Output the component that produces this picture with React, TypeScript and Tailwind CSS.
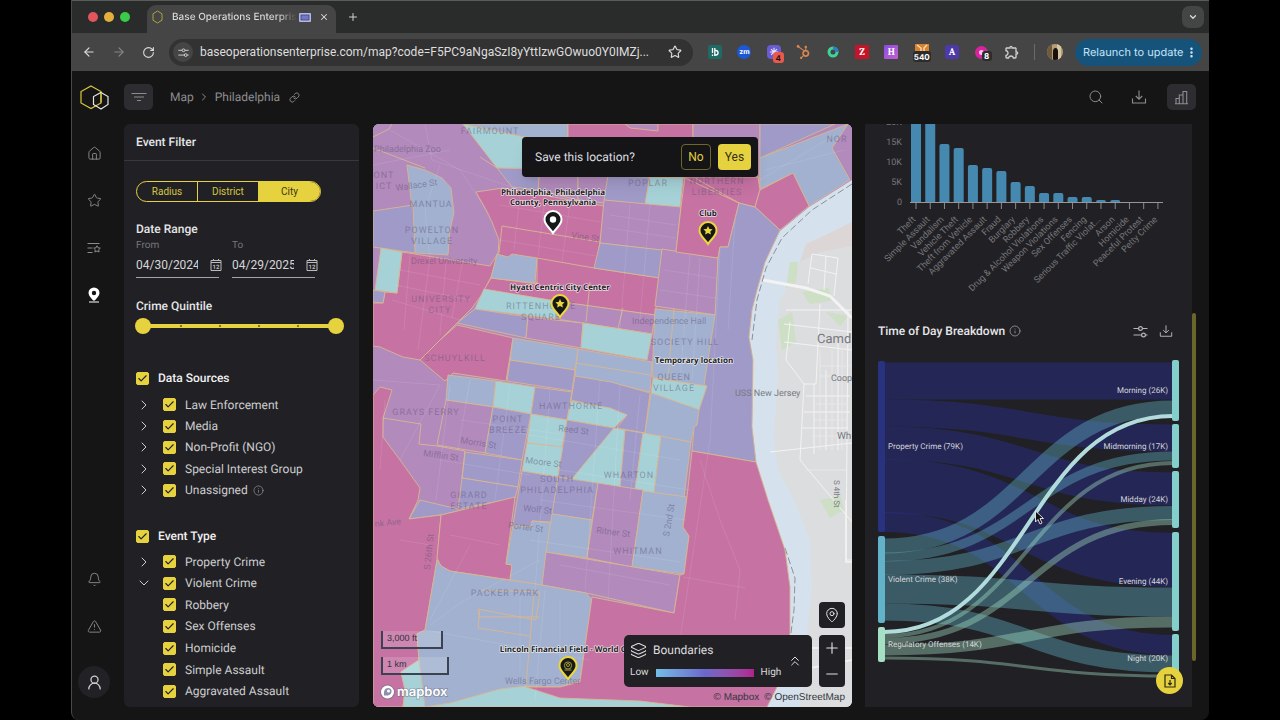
import { useState, type ReactNode } from "react";
import {
  ArrowLeft,
  ArrowRight,
  Bell,
  Check,
  ChevronDown,
  ChevronRight,
  ChevronsUp,
  House,
  Info,
  Layers,
  Link,
  MapPin,
  Minus,
  Plus,
  RotateCw,
  Search,
  Star,
  TriangleAlert,
  UserRound,
  X,
} from "lucide-react";
import { FaHubspot } from "react-icons/fa";
import { MdMoreVert, MdOutlineExtension } from "react-icons/md";

/* ---------- small icons ---------- */

const Hexagons = () => (
  <svg width="29" height="25" viewBox="0 0 29 25" fill="none" strokeWidth="1.2">
    <path d="M11 1 21 6.500v11.500L11 23.500 1 18V6.500z" stroke="#d9c93e" />
    <path d="M21 7.500 28 11.500v8L21 24l-7.500-4.500v-8z" stroke="#e4e4e4" />
    <path d="M21 8v9.500" stroke="#d9c93e" />
  </svg>
);

const TrayIcon = ({ size = 16 }: { size?: number }) => (
  <svg width={size} height={size} viewBox="0 0 16 16" fill="none" stroke="currentColor" strokeWidth="1.1">
    <path d="M1.500 9.500v4.500h13V9.500M8 1.500v8.500M4.800 7 8 10.200 11.200 7" />
  </svg>
);

const BarsIcon = () => (
  <svg width="15" height="15" viewBox="0 0 15 15" fill="none" stroke="currentColor" strokeWidth="1.100">
    <path d="M1 13.800h13M2 13.500V8.500h3.300v5M5.300 13.500v-8.500h3.700v8.500M9 13.500V1.500h3.700v12" />
  </svg>
);

const TuneIcon = ({ size = 15 }: { size?: number }) => (
  <svg width={size} height={size} viewBox="0 0 15 15" fill="none" stroke="currentColor" strokeWidth="1.200">
    <path d="M0.500 4.500h5M9.500 4.500h5M0.500 11h8M12.500 11h2" />
    <circle cx="7.500" cy="4.500" r="1.900" />
    <circle cx="10.500" cy="11" r="1.900" />
  </svg>
);

const ListStarIcon = () => (
  <svg width="14" height="12" viewBox="0 0 14 12" fill="none" stroke="currentColor" strokeWidth="1">
    <path d="M0.500 1.500h12M0.500 6h5M0.500 10.500h5" />
    <path d="m10 3.800 1 2 2.300.3-1.600 1.600.4 2.300L10 9l-2.100 1 .4-2.300-1.600-1.600L9 5.800z" />
  </svg>
);

const DateIcon = () => (
  <svg width="12" height="12" viewBox="0 0 12 12" fill="none" stroke="currentColor" strokeWidth="1">
    <path d="M1 1.500h10v10H1zM1 3.500h10M3.500 0v2M8.500 0v2" />
    <text x="6" y="10" fontSize="6" fontWeight="700" fontFamily="Roboto, sans-serif" textAnchor="middle" fill="currentColor" stroke="none">12</text>
  </svg>
);

/* ---------- browser chrome ---------- */

const BrowserTabs = () => (
  <div className="flex h-[33px] items-end justify-between border-t border-[#5a5b5b] bg-[#2a2c2b]">
    <div className="flex h-full items-end">
      <div className="flex h-full items-center gap-[6px] pl-[16px] pr-[17px]">
        <span className="size-[10px] rounded-full bg-[#e2555c]" />
        <span className="size-[10px] rounded-full bg-[#e3b03c]" />
        <span className="size-[10px] rounded-full bg-[#3ccb48]" />
      </div>
      <div className="flex h-[28px] w-[189px] items-center rounded-t-[9px] bg-[#454545] pb-[4px] pl-[5px]">
        <svg width="11" height="14" viewBox="0 0 11 14" fill="none">
          <path d="M5.500 1 10 3.800v6.400L5.500 13 1 10.200V3.800z" stroke="#a9a341" />
        </svg>
        <span className="ml-[9px] whitespace-nowrap bg-gradient-to-r from-[#dedede] from-85% to-[#454545] bg-clip-text font-[Inter] text-[10px] font-medium text-transparent">
          Base Operations Enterpris
        </span>
        <svg width="12" height="9" viewBox="0 0 12 9" className="ml-auto">
          <rect width="12" height="9" rx="1" fill="#b4b8e8" />
          <rect x="2" y="2" width="8" height="5" fill="#7478c4" stroke="#3d4178" strokeWidth="0.800" />
        </svg>
        <button aria-label="Close tab" className="ml-[8px] mr-[7px] text-[#dcdcdc]">
          <X size={10} strokeWidth={2.5} />
        </button>
      </div>
      <button aria-label="New tab" className="ml-[11px] flex h-full items-center text-[#cfcfcf]">
        <Plus size={12} />
      </button>
    </div>
    <button aria-label="Search tabs" className="mb-[5px] mr-[5px] flex size-[22px] items-center justify-center rounded-[7px] bg-[#444545] text-[#dcdcdc]">
      <ChevronDown size={10} strokeWidth={3} />
    </button>
  </div>
);

const LetterTile = ({ className, children }: { className: string; children: ReactNode }) => (
  <span className={`flex size-[14px] items-center justify-center text-[10px] font-bold leading-none text-white ${className}`}>{children}</span>
);

const Extensions = () => (
  <div className="flex w-[312px] shrink-0 items-center justify-between">
    <LetterTile className="rounded-[2px] bg-[#1f6a63]">
      <svg width="10" height="10" viewBox="0 0 10 10" fill="none" stroke="#fff" strokeWidth="1.300">
        <path d="M2.500 1v5M2.500 7.500V9M4.800 1v8M4.800 3.500h1a2.200 2.200 0 0 1 0 4.500h-1" />
      </svg>
    </LetterTile>
    <span className="flex size-[14px] items-center justify-center rounded-full bg-[#1e57d3] text-[7px] font-bold text-white">zm</span>
    <span className="relative flex size-[14px] items-center justify-center rounded-[4px] bg-[#6a5bd0]">
      <svg width="10" height="10" viewBox="0 0 12 12" stroke="#e9e6ff" strokeWidth="1.300">
        <path d="M6 1v10M1 6h10M2.500 2.500l7 7M9.500 2.500l-7 7" />
      </svg>
      <span className="absolute left-[6px] top-[7px] flex size-[11px] items-center justify-center rounded-[3px] bg-[#e8594b] text-[8px] font-bold text-[#2b1512]">4</span>
    </span>
    <FaHubspot size={14} className="text-[#d98650]" />
    <svg width="14" height="14" viewBox="0 0 14 14" fill="none" strokeWidth="3">
      <circle cx="7" cy="7" r="4" stroke="#3fd39a" />
      <path d="M7 3a4 4 0 0 1 4 4" stroke="#2b7fc9" />
    </svg>
    <LetterTile className="rounded-[1px] bg-[#c4142a] font-serif">Z</LetterTile>
    <LetterTile className="rounded-[1px] bg-gradient-to-br from-[#8a4be0] to-[#c25fd0] font-serif">H</LetterTile>
    <span className="relative size-[16px]">
      <svg width="14" height="8" viewBox="0 0 14 8" className="ml-[1px]">
        <path d="M0 0h14v8H0z" fill="#d9822b" />
        <path d="m2 1 4 3v3M12 1 9 4v3" stroke="#fbe3c6" strokeWidth="1.300" fill="none" />
      </svg>
      <span className="absolute -left-[1px] top-[7px] flex h-[11px] w-[18px] items-center justify-center rounded-[3px] bg-[#2c2c2c] text-[8px] font-bold text-white">540</span>
    </span>
    <LetterTile className="rounded-[2px] bg-[#4d3aa8] font-serif">A</LetterTile>
    <span className="relative flex size-[14px] items-center justify-center">
      <span className="size-[13px] rounded-full border-[4px] border-[#d6249f] bg-[#ffc1ea]" />
      <span className="absolute left-[7px] top-[6px] flex size-[10px] items-center justify-center rounded-[3px] bg-[#2c2c2c] text-[8px] font-bold text-white">8</span>
    </span>
    <MdOutlineExtension size={16} className="text-[#d0d0d0]" />
  </div>
);

const BrowserToolbar = () => (
  <div className="flex h-[38px] items-center bg-[#454545] pr-[7px] font-[Inter]">
    <div className="flex items-center gap-[16px] pl-[10px] pr-[14px]">
      <button aria-label="Back" className="text-[#dcdcdc]"><ArrowLeft size={14} /></button>
      <button aria-label="Forward" className="text-[#858585]"><ArrowRight size={14} /></button>
      <button aria-label="Reload" className="text-[#dcdcdc]"><RotateCw size={13} /></button>
    </div>
    <div className="flex h-[27px] min-w-0 flex-1 items-center rounded-full bg-[#323232] pl-[4px] pr-[11px]">
      <span className="flex size-[20px] shrink-0 items-center justify-center rounded-full bg-[#454545] text-[#dedede]"><TuneIcon size={11} /></span>
      <input
        aria-label="Address"
        readOnly
        value="baseoperationsenterprise.com/map?code=F5PC9aNgaSzI8yYttIzwGOwuo0Y0IMZj..."
        className="ml-[7px] min-w-0 flex-1 bg-transparent font-[Roboto] text-[12px] text-[#dedede] outline-none"
      />
      <Star size={14} className="ml-[6px] shrink-0 text-[#dcdcdc]" />
    </div>
    <div className="ml-[15px]"><Extensions /></div>
    <span className="ml-[14px] h-[16px] w-px bg-[#6b6b6b]" />
    <svg width="16" height="16" viewBox="0 0 16 16" className="ml-[12px] rounded-full bg-[#b59d75]">
      <path d="M0 0h5v16H0z" fill="#6f5a3f" />
      <path d="M10 0h4v16h-4z" fill="#d6c7a4" />
      <path d="M6 16V8q0-4 2.500-4T11 8v8z" fill="#17110d" />
    </svg>
    <button className="ml-[12px] flex h-[27px] w-[127px] shrink-0 items-center justify-between whitespace-nowrap rounded-full bg-[#15537a] pl-[8px] pr-[3px] text-[11px] text-[#c5e4fb] [text-rendering:inherit]">
      Relaunch to update
      <MdMoreVert size={15} />
    </button>
  </div>
);

/* ---------- app shell ---------- */

const AppHeader = () => (
  <header className="flex h-[53px] shrink-0 items-center pb-[1px] pl-[8px] pr-[13px] text-[#8d8d8f]">
    <Hexagons />
    <button aria-label="Toggle filters" className="ml-[15px] flex h-[26px] w-[29px] items-center justify-center rounded-[5px] bg-[#2c2c31]">
      <svg width="16" height="10" viewBox="0 0 16 10" stroke="currentColor" strokeWidth="1">
        <path d="M0.500 1.500h15M3 5h10M6 8.500h4" />
      </svg>
    </button>
    <nav className="ml-[17px] flex items-center text-[12px]">
      <a href="#map">Map</a>
      <ChevronRight size={12} className="mx-[4px]" />
      <a href="#philadelphia" className="ml-px">Philadelphia</a>
      <Link size={11} className="ml-[9px]" />
    </nav>
    <div className="ml-auto flex items-center">
      <button aria-label="Search"><Search size={16} strokeWidth={1.5} /></button>
      <button aria-label="Download" className="ml-[27px]"><TrayIcon /></button>
      <button aria-label="Analytics" className="ml-[20px] flex h-[26px] w-[29px] items-center justify-center rounded-[5px] bg-[#2c2c31]"><BarsIcon /></button>
    </div>
  </header>
);

const railItem = "flex h-[47px] items-center justify-center";

const NavRail = () => (
  <nav className="flex w-[44px] shrink-0 flex-col pb-[22px] pt-[6px] text-[#8b8b8e]">
    <a href="#home" aria-label="Home" className={railItem}><House size={15} strokeWidth={1.5} /></a>
    <a href="#saved" aria-label="Saved" className={railItem}><Star size={15} strokeWidth={1.5} /></a>
    <a href="#lists" aria-label="Lists" className={railItem}><ListStarIcon /></a>
    <a href="#map" aria-label="Map" className={railItem}>
      <svg width="14" height="16" viewBox="0 0 14 16">
        <path fillRule="evenodd" d="M7 0.500a5.500 5.500 0 0 0-5.500 5.500C1.500 9.500 7 14 7 14s5.500-4.500 5.500-8A5.500 5.500 0 0 0 7 .5zm0 3.300a2.200 2.200 0 1 1 0 4.400 2.200 2.200 0 0 1 0-4.400z" fill="#fff" />
        <path d="M2 15h10" stroke="#fff" />
      </svg>
    </a>
    <a href="#alerts" aria-label="Notifications" className={`${railItem} mt-auto`}><Bell size={15} strokeWidth={1.5} /></a>
    <a href="#warnings" aria-label="Warnings" className={railItem}><TriangleAlert size={15} strokeWidth={1.5} /></a>
    <a href="#account" aria-label="Account" className="mx-auto mt-[16px] flex size-[32px] items-center justify-center rounded-full bg-[#222226] text-[#d0d0d0]">
      <UserRound size={17} strokeWidth={1.8} />
    </a>
  </nav>
);

/* ---------- filter panel ---------- */

const Tick = ({ label, bold, info }: { label: string; bold?: boolean; info?: boolean }) => (
  <label className={`flex items-center gap-[9px] text-[12px] ${bold ? "font-medium text-[#f0f0f0]" : "text-[#cdcdcf]"}`}>
    <span className="relative size-[13px]">
      <input type="checkbox" defaultChecked className="block size-[13px] appearance-none rounded-[2px] border border-[#e6d23f] checked:bg-[#e6d23f]" />
      <Check size={11} strokeWidth={2.5} className="pointer-events-none absolute left-px top-px text-[#222]" />
    </span>
    {label}
    {info && <Info size={11} strokeWidth={1.5} className="-ml-[4px] text-[#98989a]" />}
  </label>
);

type Row = { label: string; arrow?: "right" | "down"; info?: boolean };

const sources: Row[] = [
  { label: "Law Enforcement", arrow: "right" },
  { label: "Media", arrow: "right" },
  { label: "Non-Profit (NGO)", arrow: "right" },
  { label: "Special Interest Group", arrow: "right" },
  { label: "Unassigned", arrow: "right", info: true },
];

const types: Row[] = [
  { label: "Property Crime", arrow: "right" },
  { label: "Violent Crime", arrow: "down" },
  { label: "Robbery" },
  { label: "Sex Offenses" },
  { label: "Homicide" },
  { label: "Simple Assault" },
  { label: "Aggravated Assault" },
];

const TreeRow = ({ row }: { row: Row }) => (
  <li className="flex items-center">
    <span className="flex w-[27px] items-center">
      {row.arrow && (
        <button aria-label={`Toggle ${row.label}`} className="text-[#cdcdcf]">
          {row.arrow === "right" ? <ChevronRight size={16} strokeWidth={1.5} /> : <ChevronDown size={16} strokeWidth={1.5} />}
        </button>
      )}
    </span>
    <Tick label={row.label} info={row.info} />
  </li>
);

const DateField = ({ id, label, value }: { id: string; label: string; value: string }) => (
  <div className="w-[83px]">
    <label htmlFor={id} className="block text-[10px] leading-[14px] text-[#77777a]">{label}</label>
    <div className="mt-[2px] flex h-[23px] items-center border-b border-[#a5a5a7] pb-[2px]">
      <input id={id} defaultValue={value} className="w-[62px] bg-transparent text-[12px] text-[#d6d6d8] outline-none" />
      <span className="ml-[12px] -mr-[4px] shrink-0 text-[#bcbcbe]"><DateIcon /></span>
    </div>
  </div>
);

const sliderInput =
  "pointer-events-none absolute inset-0 h-[16px] w-full appearance-none bg-transparent [&::-webkit-slider-thumb]:pointer-events-auto [&::-webkit-slider-thumb]:size-[16px] [&::-webkit-slider-thumb]:appearance-none [&::-webkit-slider-thumb]:rounded-full [&::-webkit-slider-thumb]:bg-[#e6d23f]";

const FilterPanel = () => {
  const [area, setArea] = useState("City");
  return (
    <aside className="w-[235px] shrink-0 overflow-hidden rounded-[6px] bg-[#212125] ml-[8px]">
      <h2 className="h-[37px] border-b border-[#38383c] pl-[12px] text-[12px] font-medium leading-[36px] text-[#e6e6e8]">Event Filter</h2>
      <div className="px-[12px]">
        <div className="mt-[20px] grid h-[21px] w-[185px] grid-cols-3 divide-x divide-[#e6d23f] overflow-hidden rounded-full border border-[#e6d23f] text-[10px]">
          {["Radius", "District", "City"].map((a) => (
            <button key={a} aria-pressed={a === area} onClick={() => setArea(a)} className={a === area ? "bg-[#e6d23f] text-[#3a3618]" : "text-[#d6c53f]"}>
              {a}
            </button>
          ))}
        </div>

        <h3 className="mt-[18px] text-[12px] font-medium leading-[18px] text-[#e6e6e8]">Date Range</h3>
        <div className="mt-[1px] flex gap-[13px]">
          <DateField id="from" label="From" value="04/30/2024" />
          <DateField id="to" label="To" value="04/29/2025" />
        </div>

        <h3 className="mt-[18px] text-[12px] font-medium leading-[20px] text-[#e6e6e8]">Crime Quintile</h3>
        <div className="relative -mx-[1px] mt-[2px] h-[16px] w-[209px]">
          <div className="mx-[8px] flex h-full items-center">
            <div className="flex h-[4px] w-full items-center justify-evenly bg-[#e6d23f]">
              {[1, 2, 3, 4].map((d) => <span key={d} className="size-[2px] rounded-full bg-[#5c5420]" />)}
            </div>
          </div>
          <input type="range" aria-label="Lowest quintile" min={0} max={5} defaultValue={0} className={sliderInput} />
          <input type="range" aria-label="Highest quintile" min={0} max={5} defaultValue={5} className={sliderInput} />
        </div>

        <div className="mt-[35px]"><Tick label="Data Sources" bold /></div>
        <ul className="mt-[7px] grid h-[107px] auto-rows-fr">
          {sources.map((r) => <TreeRow key={r.label} row={r} />)}
        </ul>
        <div className="mt-[26px]"><Tick label="Event Type" bold /></div>
        <ul className="mt-[6px] grid h-[151px] auto-rows-fr">
          {types.map((r) => <TreeRow key={r.label} row={r} />)}
        </ul>
      </div>
    </aside>
  );
};

/* ---------- map ---------- */

const PINK = "#c672a3";
const MAUVE = "#b28abb";
const VIOLET = "#a09ac8";
const BLUE = "#a1b1cf";
const AQUA = "#a6d2d7";

const tracts: [string, string][] = [
  [AQUA, "463,124 530,138 560,140 560,169 497,168"],
  [BLUE, "500,124 568,124 568,140 530,138 463,124"],
  [PINK, "568,124 693,124 693,140 568,140"],
  [MAUVE, "625,124 658,124 658,131 630,128"],
  [VIOLET, "497,168 540,169 538,190 512,187"],
  [MAUVE, "540,169 578,169 578,200 538,190"],
  [MAUVE, "578,169 612,169 606,203 578,200"],
  [VIOLET, "609,169 651,169 645,205 604,200"],
  [AQUA, "651,169 684,169 680,207 645,205"],
  [MAUVE, "693,124 760,124 760,190 758,177 693,177"],
  [VIOLET, "760,124 835,124 760,158"],
  [BLUE, "760,158 848,124 832,148 850,180 809,206 793,173 760,189"],
  [BLUE, "407,165 425,170 442,178 451,188 454,213 450,230 448,255 415,253 413,217"],
  [VIOLET, "373,211 413,205 415,253 373,247"],
  [PINK, "402,252 490,266 498,253 491,277 483,293 472,308 457,323 440,340 420,360 403,357 380,347 373,346 373,303 383,303 385,292 397,293"],
  [AQUA, "381,248 402,252 397,293 375,290"],
  [VIOLET, "373,290 385,292 383,303 373,302"],
  [PINK, "476,192 503,188 604,206 600,243 594,277 537,283 498,255 499,240 492,222 486,210"],
  [PINK, "491,278 537,284 537,258 594,268 660,278 655,315 560,302 484,290"],
  [BLUE, "497,254 508,257 512,254 537,258 535,283 491,278"],
  [AQUA, "484,289 562,302 556,319 475,309"],
  [MAUVE, "604,200 681,207 676,252 600,243"],
  [VIOLET, "600,243 662,250 660,278 594,268"],
  [MAUVE, "662,249 718,258 716,315 655,306"],
  [PINK, "685,177 758,177 760,190 755,207 739,203 728,247 720,247 718,258 676,252 681,207"],
  [PINK, "760,190 793,173 809,206 780,230 755,207"],
  [VIOLET, "475,309 528,317 526,338 457,323"],
  [MAUVE, "528,317 583,323 581,348 526,338"],
  [MAUVE, "562,302 655,315 652,334 583,323 556,319"],
  [AQUA, "583,323 652,334 647,360 581,348"],
  [PINK, "457,325 513,338 506,381 453,373 445,381 420,360 440,340"],
  [BLUE, "513,338 578,349 575,370 510,360"],
  [VIOLET, "510,360 575,370 572,391 507,381"],
  [BLUE, "578,349 652,362 650,392 612,383 575,376"],
  [VIOLET, "575,376 611,382 650,393 645,433 617,428 627,415 610,409 571,400"],
  [BLUE, "448,375 496,381 493,407 446,400"],
  [AQUA, "496,381 535,387 531,414 493,407"],
  [VIOLET, "535,387 572,392 567,420 531,414"],
  [MAUVE, "446,400 493,407 485,453 437,445"],
  [VIOLET, "493,407 531,414 522,460 485,453"],
  [AQUA, "571,401 610,408 627,415 614,428 567,420"],
  [AQUA, "531,414 567,420 562,447 527,443"],
  [AQUA, "527,443 563,447 558,477 522,471"],
  [VIOLET, "567,420 614,428 572,479 558,477"],
  [AQUA, "614,428 625,430 620,488 572,479"],
  [VIOLET, "625,430 643,433 635,490 620,488"],
  [AQUA, "643,433 661,436 654,493 635,490"],
  [BLUE, "661,436 691,442 684,497 654,493"],
  [BLUE, "655,309 716,315 704,386 652,377"],
  [AQUA, "653,378 707,386 699,410 651,393"],
  [BLUE, "651,393 700,410 697,425 694,427 691,442 645,433"],
  [VIOLET, "739,203 755,207 780,230 765,262 757,290 752,310 749,337 753,360 752,427 756,462 692,451 694,427 697,425 699,410 707,386 704,385 715,315 718,258 720,247 728,247"],
  [VIOLET, "465,452 522,460 518,487 462,478"],
  [VIOLET, "462,478 518,487 515,498 441,515 458,509"],
  [VIOLET, "420,500 458,509 515,498 441,515 409,519"],
  [PINK, "373,395 380,387 392,390 383,418 383,437 400,460 420,488 418,500 409,519 441,515 437,560 425,630 417,634 419,660 401,672 405,690 403,707 373,707"],
  [PINK, "441,515 515,497 506,564 512,565 510,580 450,571 441,566 437,558"],
  [VIOLET, "522,471 558,477 552,522 532,521 531,527 513,525"],
  [BLUE, "513,525 531,527 532,521 552,523 542,585 510,580 512,565 506,564"],
  [VIOLET, "558,477 598,483 592,520 552,514"],
  [BLUE, "552,514 592,520 587,558 546,552"],
  [MAUVE, "598,483 643,490 632,567 587,558"],
  [BLUE, "643,491 687,497 683,527 689,536 684,574 632,567"],
  [MAUVE, "546,552 680,575 674,613 591,594 542,585"],
  [AQUA, "401,672 419,660 440,690 526,686 560,690 700,707 403,707 405,690"],
  [BLUE, "437,560 441,566 450,571 542,585 586,593 592,600 580,680 560,687 526,686 500,689 450,703 425,707 419,660 417,634 425,630"],
  [PINK, "692,451 756,462 768,500 785,550 790,587 790,633 785,660 777,687 767,707 690,707 640,701 560,698 526,687 560,687 580,682 592,597 674,613 680,575 684,574 689,536 683,527 687,497"],
];

const areas: [string, number, number][] = [
  ["FAIRMOUNT", 490, 134],
  ["ONT", 384, 178],
  ["ICT", 384, 189],
  ["MANTUA", 431, 207],
  ["POWELTON", 432, 233],
  ["VILLAGE", 432, 244],
  ["UNIVERSITY", 441, 302],
  ["CITY", 440, 313],
  ["RITTENHOUSE", 541, 309],
  ["SQUARE", 541, 320],
  ["POPLAR", 648, 186],
  ["NORTHERN", 717, 184],
  ["LIBERTIES", 717, 195],
  ["NOR", 837, 142],
  ["SOCIETY HILL", 685, 345],
  ["QUEEN", 674, 380],
  ["VILLAGE", 674, 391],
  ["SCHUYLKILL", 455, 361],
  ["GRAYS FERRY", 426, 415],
  ["HAWTHORNE", 571, 409],
  ["POINT", 508, 422],
  ["BREEZE", 508, 433],
  ["WHARTON", 629, 478],
  ["SOUTH", 557, 482],
  ["PHILADELPHIA", 557, 493],
  ["GIRARD", 469, 498],
  ["ESTATE", 469, 509],
  ["WHITMAN", 638, 554],
  ["PACKER PARK", 505, 596],
];

// label, x, y, rotation
const streets: [string, number, number, number][] = [
  ["Philadelphia Zoo", 374, 152, 0],
  ["Wallace St", 396, 191, -8],
  ["Drexel University", 411, 264, 0],
  ["Vine St", 571, 238, 8],
  ["Independence Hall", 632, 324, 0],
  ["Morris St", 460, 443, 9],
  ["Mifflin St", 423, 456, 8],
  ["Moore St", 525, 463, 7],
  ["Reed St", 558, 431, 7],
  ["Wolf St", 523, 511, 6],
  ["Porter St", 508, 528, 7],
  ["Ritner St", 596, 533, 7],
  ["S 26th St", 430, 570, -84],
  ["S 2nd St", 669, 537, -80],
  ["nk Ave", 375, 527, -6],
  ["Wells Fargo Center", 505, 684, 0],
];

const Pin = ({ x, y, ring, children }: { x: number; y: number; ring: string; children: ReactNode }) => (
  <g transform={`translate(${x} ${y})`}>
    <path d="M0 11C-3 6-8.500 3-8.500-2.500a8.500 8.500 0 0 1 17 0C8.500 3 3 6 0 11z" fill="#17181a" stroke={ring} strokeWidth="2" />
    {children}
  </g>
);

const StarMark = () => <path d="m0-7 1.400 2.900 3.200.4-2.300 2.200.6 3.100L0 .1l-2.900 1.500.6-3.100-2.300-2.200 3.200-.4z" fill="#ecd83a" />;

const pinLabels: [string, number, number][] = [
  ["Philadelphia, Philadelphia", 553, 195],
  ["County, Pennsylvania", 553, 205],
  ["Club", 708, 216],
  ["Hyatt Centric City Center", 560, 290],
  ["Temporary location", 694, 363],
  ["Lincoln Financial Field - World Cup", 568, 652],
];

const CityMap = () => (
  <svg className="absolute inset-0 size-full" viewBox="373 124 479 583" preserveAspectRatio="xMidYMid slice">
    <path d="M373 124h479v583H373z" fill="#d5e2ee" />
    <path d="M852 222 832 232 806 244 800 262 792 280 780 300 776 340 778 380 774 440 778 470 794 500 810 540 812 590 806 640 800 707H852z" fill="#dcddde" />
    <path d="M852 222 832 232 806 244 800 262 820 252 852 246z" fill="#ddd6d6" />
    <path d="M790 262h8l-2 20-10 6zM778 320l14-8 4 30-14 8zM802 292l26-4 6 12-24 4zM826 312l22 4-8 10zM820 500l20-4 4 14-14 8z" fill="#cddfc4" />
    <g fill="none" stroke="#f3f3f4" strokeWidth="1.500">
      <path d="M763 280 806 288 830 296 852 318" strokeWidth="3" />
      <path d="M808 284 812 254 838 258 834 296M811 268 836 274M826 256 824 290M786 310h66M784 324 852 332M784 342 852 350M790 322l-4 38 18 24h12l4-80M804 384 800 460 852 522M770 452 852 443M848 310 846 560h6M806 396h44M804 412h46M802 428h46M814 384v70M826 370v80M838 340v110" strokeWidth="1" />
      <path d="M846 500v62h6M812 648h40M800 670 852 660" />
    </g>
    <path d="M820 366h30M820 376h30M816 404h32M814 420h34M812 436h34M806 470h40M820 350v100M832 350v100M842 350v100" stroke="#ebebec" strokeWidth="0.800" />
    <path d="M373 124H852V180L809 207 780 231 765 262 757 290 752 310 749 337 753 360 752 427 756 462 768 500 785 550 790 587 790 633 777 687 767 707H373z" fill={MAUVE} />
    <path d="M852 184 812 210 782 238 766 268 757 300 752 340M785 548 795 578 794 610 790 640" fill="none" stroke="#8b9099" strokeDasharray="7 3" />
    <g stroke="#d8b792" strokeWidth="0.900" strokeLinejoin="round">
      {tracts.map(([fill, points], i) => <polygon key={i} points={points} fill={fill} />)}
      <path d="M502 226 600 242M502 226 499 253M383 418 421 424 419 444 437 446 465 451 462 478M373 137l16-8 3-5M373 148 425 168M480 157 497 168M576 363 650 375M604 176 685 178 739 203M481 590 540 592 536 620 478 609M478 609 479 617 540 617M530 636 478 628 480 609M526 686 534 592M695 178 739 203" fill="none" />
      <path d="M590 282 586 322M623 308 618 328M674 308 668 378" fill="none" />
    </g>
    <g fill="none" stroke="#fff" strokeOpacity="0.100">
      <path d="M425 124 432 160 520 190M390 130 460 170 490 215M440 165 425 210 430 260M373 165 450 150M400 270 480 285M395 285 470 300M392 300 460 320M410 255 404 330M430 258 418 350M446 262 440 335M462 264 452 318M500 205 600 222M500 240 596 256M520 195 514 250M545 198 538 256M570 202 562 262M610 215 676 225M608 228 676 238M630 205 620 330M650 205 640 320M690 255 680 380M700 258 692 380M664 270 716 278M660 290 716 298" />
      <path d="M450 385 436 500M470 380 458 450M510 385 495 500M550 390 535 590M600 380 585 590M620 385 608 600M640 395 630 500M560 470 690 490M500 430 680 460M460 420 560 434M440 460 530 475M540 500 686 520M530 540 680 562M560 565 670 585M545 590 535 700M425 630 590 660M470 545 430 620M700 460 720 520 740 570 735 620M683 577 745 588M450 535 500 545M400 540 430 545" />
      <path d="M720 250 710 440 680 640M735 220 728 330M373 380 440 385 400 460M385 400 380 470" />
      <path d="M430 625 465 600 540 560M760 180 835 135M765 170 845 150M560 600v80M520 592v80" />
    </g>
    <g fontFamily="Roboto, sans-serif" fontSize="9" letterSpacing="1" fill="#64567c" fillOpacity="0.500" textAnchor="middle">
      {areas.map(([t, x, y]) => <text key={t + x + y} x={x} y={y}>{t}</text>)}
    </g>
    <g fontFamily="Roboto, sans-serif" fontSize="9" fill="#5f5478" fillOpacity="0.500">
      {streets.map(([t, x, y, r]) => <text key={t} x={x} y={y} transform={`rotate(${r} ${x} ${y})`}>{t}</text>)}
    </g>
    <g fontFamily="Roboto, sans-serif" fontSize="9" fill="#77797e">
      <text x="735" y="396">USS New Jersey</text>
      <text x="831" y="381">Coop</text>
      <text x="837" y="439" fontSize="10">Wh</text>
      <text x="817" y="343" fontSize="13">Camd</text>
      <text x="834" y="480" fontSize="8" transform="rotate(90 834 480)">S 4th St</text>
    </g>
    <g fontFamily="'Open Sans', 'Noto Sans', sans-serif" fontSize="8" fontWeight="700" fill="#222" stroke="#fff" strokeOpacity="0.750" strokeWidth="1.500" paintOrder="stroke" strokeLinejoin="round" textAnchor="middle">
      {pinLabels.map(([t, x, y]) => <text key={t} x={x} y={y}>{t}</text>)}
    </g>
    <Pin x={553} y={222} ring="#fff"><circle cy="-2.500" r="3.200" fill="#fff" /></Pin>
    <Pin x={708} y={233} ring="#ecd83a"><StarMark /></Pin>
    <Pin x={560} y={306} ring="#ecd83a"><StarMark /></Pin>
    <Pin x={568} y={668} ring="#ecd83a">
      <circle cy="-2.500" r="3.600" fill="none" stroke="#a99b3a" />
      <circle cy="-3" r="1.500" fill="none" stroke="#a99b3a" />
      <path d="M-3.500 2h7" stroke="#a99b3a" />
    </Pin>
  </svg>
);

const scaleBar = "flex h-[18px] items-center border-x-2 border-b-2 border-[#3b4352] bg-white/15 pl-[4px] text-[9px] text-[#2f333c]";
const mapButton = "flex w-[26px] items-center justify-center bg-[#212125] text-[#e2e2e4]";

const MapPane = () => (
  <main className="relative ml-[14px] min-w-0 flex-1 overflow-hidden rounded-[6px]">
    <CityMap />
    <div className="absolute right-[94px] top-[13px] flex h-[40px] w-[236px] items-center rounded-[4px] bg-[#151517] pl-[13px] pr-[7px] text-[12px] text-[#dedee0] shadow-lg">
      Save this location?
      <button className="ml-auto h-[26px] w-[30px] rounded-[4px] border border-[#6f6728] text-[#e0ce42]">No</button>
      <button className="ml-[7px] h-[26px] w-[33px] rounded-[4px] bg-[#e6d23f] text-[#33301a]">Yes</button>
    </div>

    <div className="absolute bottom-[6px] left-[6px] font-['Liberation_Sans',sans-serif]">
      <div className={`${scaleBar} ml-[2px] w-[62px]`}>3,000 ft</div>
      <div className={`${scaleBar} ml-[2px] mt-[8px] w-[68px]`}>1 km</div>
      <svg width="74" height="18" viewBox="0 0 74 18" className="mt-[8px]">
        <circle cx="8.500" cy="9" r="6.500" fill="#fff" stroke="#6d7386" strokeOpacity="0.600" strokeWidth="2" paintOrder="stroke" />
        <path d="M5 12.500c-.5-4 .5-7.500 4.500-7.500a3.500 3.500 0 0 1 3 4c-.5 3-3.500 4-7.500 3.500z" fill="#8d90a8" />
        <circle cx="9.500" cy="8" r="1.500" fill="#fff" />
        <text x="18" y="13" fontFamily="Inter, sans-serif" fontSize="13" fontWeight="600" fill="#fff" stroke="#6d7386" strokeOpacity="0.600" strokeWidth="1.500" paintOrder="stroke">mapbox</text>
      </svg>
    </div>

    <div className="absolute bottom-[2px] right-[7px] flex flex-col items-end">
      <div className="flex items-end gap-[7px]">
        <div className="flex h-[52px] w-[188px] items-center rounded-[5px] bg-[#212125] pl-[6px] pr-[9px] text-[#dcdcde]">
          <div>
            <div className="flex items-center gap-[6px] text-[12px] leading-[16px]">
              <Layers size={17} strokeWidth={1.5} />
              Boundaries
            </div>
            <div className="mt-[6px] flex items-center gap-[7px] text-[10px] leading-[16px]">
              Low
              <span className="h-[8px] w-[98px] bg-gradient-to-r from-[#73bde6] via-[#6a68cc] to-[#b0218f]" />
              High
            </div>
          </div>
          <button aria-label="Expand legend" className="ml-auto"><ChevronsUp size={16} strokeWidth={1.5} /></button>
        </div>
        <div className="flex flex-col gap-[7px]">
          <button aria-label="Locate" className={`${mapButton} h-[26px] rounded-[4px]`}><MapPin size={16} strokeWidth={1.5} /></button>
          <div className="overflow-hidden rounded-[4px]">
            <button aria-label="Zoom in" className={`${mapButton} h-[26px]`}><Plus size={18} strokeWidth={1.5} /></button>
            <button aria-label="Zoom out" className={`${mapButton} h-[26px]`}><Minus size={18} strokeWidth={1.5} /></button>
          </div>
        </div>
      </div>
      <div className="mt-[4px] flex gap-[5px] font-['Liberation_Sans',sans-serif] text-[10px] leading-[14px] text-[#33363c]">
        <a href="#mapbox">© Mapbox</a>
        <a href="#osm">© OpenStreetMap</a>
      </div>
    </div>
  </main>
);

/* ---------- charts ---------- */

const crimes: [string, number][] = [
  ["Theft", 90],
  ["Simple Assault", 84],
  ["Vandalism", 58],
  ["Vehicle Theft", 54],
  ["Theft from Vehicle", 37],
  ["Aggravated Assault", 34],
  ["Fraud", 31],
  ["Burglary", 20],
  ["Robbery", 16],
  ["Drug & Alcohol Violations", 9],
  ["Weapon Violations", 9],
  ["Sex Offenses", 5],
  ["Fencing", 5],
  ["Serious Traffic Violat...", 2],
  ["Arson", 2],
  ["Homicide", 0],
  ["Peaceful Protest", 0],
  ["Petty Crime", 0],
];

const CrimeChart = () => (
  <svg className="block h-[174px] w-full" viewBox="865 124 327 174" fontFamily="Roboto, sans-serif" fontSize="9" fill="#76767a">
    {["0", "5K", "10K", "15K", "20K"].map((t, i) => (
      <text key={t} x="902" y={205 - i * 20} textAnchor="end">{t}</text>
    ))}
    {crimes.map(([name, h], i) => {
      const x = 911 + i * 14.23;
      return (
        <g key={name}>
          {h > 0 && <path d={`M${x} 202v${-h + 2}q0-2 2-2h6q2 0 2 2v${h - 2}z`} fill="#4689b0" />}
          <path d={`M${x + 5} 202v7`} stroke="#8a8a8d" />
          <text x={x + 5} y="220" textAnchor="end" transform={`rotate(-45 ${x + 5} 220)`}>{name}</text>
        </g>
      );
    })}
    <path d="M910 202.500h253" stroke="#97979a" />
  </svg>
);

const P = "#2b33a0";
const V = "#62b3c9";
const R = "#a6e0c4";

// colour, left y, right y, thickness
const flows: [string, number, number, number][] = [
  [P, 381, 381, 37],
  [P, 413, 438, 27],
  [P, 443, 489, 33],
  [P, 486, 560, 54],
  [P, 522, 645, 20],
  [V, 546, 408, 15],
  [V, 557, 456, 9],
  [V, 568, 513, 14],
  [V, 589, 602, 29],
  [V, 612, 664, 17],
  [R, 636, 463, 4],
  [R, 641, 522, 6],
  [R, 650, 622, 11],
  [R, 658, 676, 3],
];

const nodes: [number, number, number, string][] = [
  [878, 361, 171, "#28327f"],
  [878, 536, 87, V],
  [878, 627, 35, R],
  [1172, 360, 61, "#84cfcb"],
  [1172, 424, 44, "#84cfcb"],
  [1172, 471, 57, "#84cfcb"],
  [1172, 532, 99, "#84cfcb"],
  [1172, 634, 46, "#84cfcb"],
];

const TimeSankey = () => (
  <svg className="block h-[326px] w-full" viewBox="865 356 327 326" fontFamily="Roboto, sans-serif" fontSize="8" fill="#d5d5da">
    <g fill="none">
      {flows.map(([c, a, b, w], i) => (
        <path key={i} d={`M884 ${a}C1028 ${a} 1028 ${b} 1173 ${b}`} stroke={c} strokeWidth={w} strokeOpacity="0.400" />
      ))}
      <path d="M884 632C1028 632 1028 416 1173 416" stroke="#b2dcdc" strokeWidth="4" />
    </g>
    {nodes.map(([x, y, h, c]) => <rect key={y} x={x} y={y} width="7" height={h} rx="2" fill={c} />)}
    <text x="888" y="449">Property Crime (79K)</text>
    <text x="888" y="582">Violent Crime (38K)</text>
    <text x="888" y="647">Regulatory Offenses (14K)</text>
    <g textAnchor="end">
      <text x="1168" y="393">Morning (26K)</text>
      <text x="1168" y="449">Midmorning (17K)</text>
      <text x="1168" y="502">Midday (24K)</text>
      <text x="1168" y="584">Evening (44K)</text>
      <text x="1168" y="661">Night (20K)</text>
    </g>
    <path d="M1035.500 511v11l2.500-2.500 2 4.500 2-1-2-4.500h3.500z" fill="#111" stroke="#eee" strokeWidth="0.900" />
  </svg>
);

const ChartsPanel = () => (
  <section className="ml-[13px] flex shrink-0 mr-[13px]">
    <div className="relative w-[327px] overflow-hidden bg-[#212125]">
      <CrimeChart />
      <div className="mt-[22px] flex h-[22px] items-center pl-[13px] pr-[19px] text-[#e6e6e8]">
        <h2 className="text-[12px] font-medium">Time of Day Breakdown</h2>
        <Info size={12} strokeWidth={1.5} className="ml-[4px] text-[#a5a5a8]" />
        <button aria-label="Chart settings" className="ml-auto text-[#b5b5b8]"><TuneIcon /></button>
        <button aria-label="Download chart" className="ml-[11px] text-[#b5b5b8]"><TrayIcon size={14} /></button>
      </div>
      <div className="mt-[14px]"><TimeSankey /></div>
      <button aria-label="Export report" className="absolute bottom-[13px] right-[9px] flex size-[27px] items-center justify-center rounded-full bg-[#e6d23f] text-[#2a2812]">
        <svg width="12" height="14" viewBox="0 0 12 14" fill="none" stroke="currentColor" strokeWidth="1.200">
          <path d="M1 1h6.500L11 4.500V13H1zM7.500 1v3.500H11M6 6v4.500M4.200 9 6 10.800 7.800 9" />
        </svg>
      </button>
    </div>
    <div className="flex w-[4px] flex-col">
      <span className="mt-[189px] h-[348px] rounded-full bg-[#6b642b]" />
    </div>
  </section>
);

export default function App() {
  return (
    <div className="h-screen overflow-hidden bg-black px-[71px] font-[Roboto,sans-serif] [text-rendering:geometricPrecision]">
      <div className="flex h-full flex-col overflow-hidden rounded-b-[8px] border-l border-[#4a4a4a] bg-[#151516]">
        <BrowserTabs />
        <BrowserToolbar />
        <AppHeader />
        <div className="flex min-h-0 flex-1">
          <NavRail />
          <div className="mb-[13px] flex min-w-0 flex-1">
            <FilterPanel />
            <MapPane />
            <ChartsPanel />
          </div>
        </div>
      </div>
    </div>
  );
}
